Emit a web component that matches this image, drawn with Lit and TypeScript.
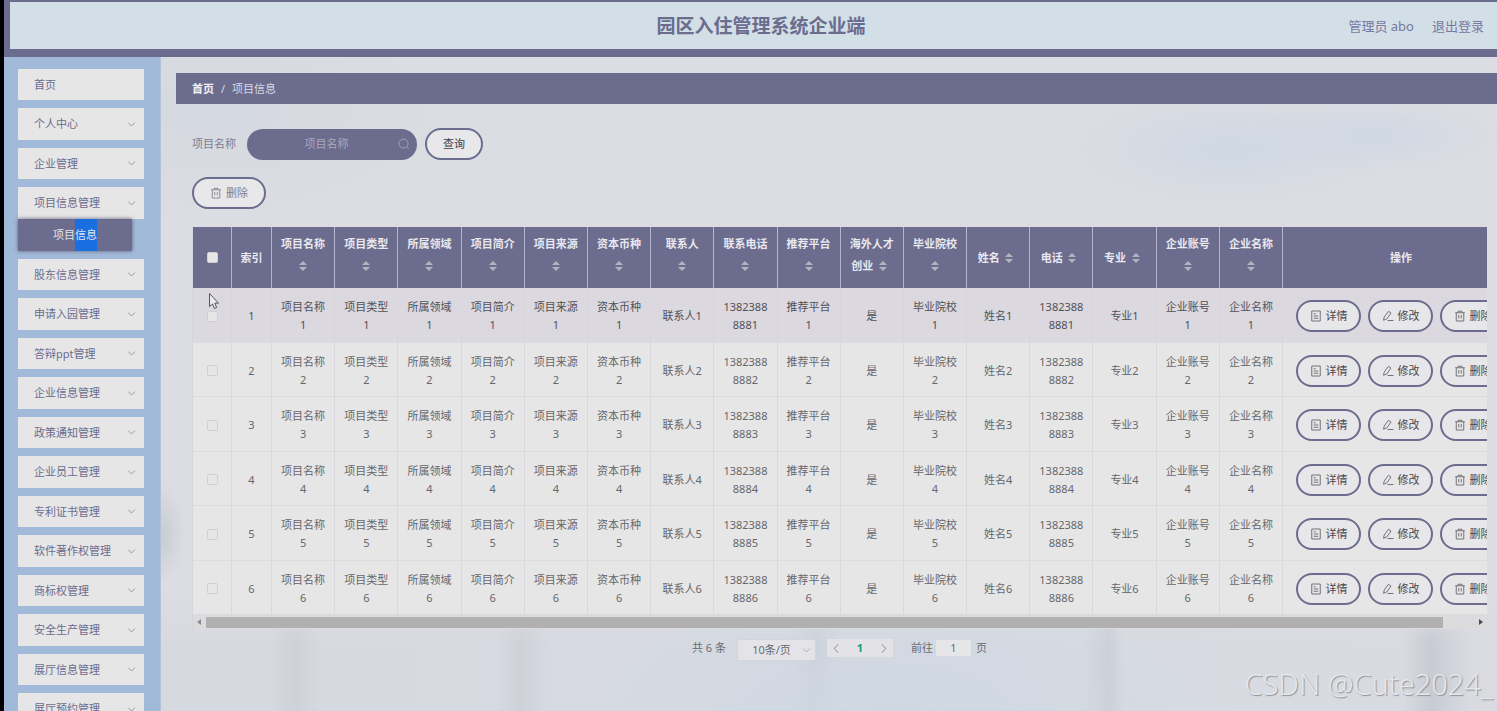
import { LitElement, html, css, svg } from "lit";
import { customElement, property, state } from "lit/decorators.js";
import { classMap } from "lit/directives/class-map.js";

const MENU_TOP = ["首页", "个人中心", "企业管理", "项目信息管理"];
const MENU_REST = [
  "股东信息管理", "申请入园管理", "答辩ppt管理", "企业信息管理", "政策通知管理", "企业员工管理",
  "专利证书管理", "软件著作权管理", "商标权管理", "安全生产管理", "展厅信息管理", "展厅预约管理",
];
const COLUMNS = [
  "项目名称", "项目类型", "所属领域", "项目简介", "项目来源", "资本币种", "联系人", "联系电话",
  "推荐平台", "海外人才创业", "毕业院校", "姓名", "电话", "专业", "企业账号", "企业名称",
];

const cellValue = (column: string, n: number) => {
  if (column === "海外人才创业") return "是";
  if (column === "联系电话" || column === "电话") return `1382388888${n}`;
  return `${column}${n}`;
};

const icon = (body: unknown, size = 12) => html`<svg
  width=${size} height=${size} viewBox="0 0 24 24" fill="none" stroke="currentColor"
  stroke-width="1.8" aria-hidden="true">${body}</svg>`;

const chevronDown = svg`<path d="M3 7l9 9 9-9" stroke-width="2.4"/>`;
const chevronLeft = svg`<path d="M16 3l-9 9 9 9" stroke-width="2.2"/>`;
const chevronRight = svg`<path d="M8 3l9 9-9 9" stroke-width="2.2"/>`;
const magnifier = svg`<circle cx="11" cy="11" r="9"/><path d="M17.500 17.500L21 22"/>`;
const trash = svg`<path d="M2.500 5.500h19M8 5V2.500h8V5M4.500 5.500V22h15V5.500M9.500 10v7M14.500 10v7"/>`;
const doc = svg`<path d="M3.500 2h17v20h-17zM7.500 7.500h4M7.500 12h9M7.500 16.500h9"/>`;
const pen = svg`<path d="M3 20.500l1.500-6.500L13 2.500l5 3.500L9.500 18 3 20.500zM11 21h12"/>`;

@customElement("side-menu")
export class SideMenu extends LitElement {
  static styles = css`
    :host { display: block; background: #a2bad9; padding: 12px 16px 0 14px; overflow: hidden; border-right: 1px solid #b4c2d8; }
    .list { list-style: none; margin: 0; padding: 0; }
    .entry { margin-bottom: 8px; }
    .entry.open { margin-bottom: 0; }
    .link {
      display: flex; align-items: center; justify-content: space-between; box-sizing: border-box;
      height: 32px; padding: 0 8px 0 16px; background: #e6e6e7; color: #6b6c8e;
      text-decoration: none; white-space: nowrap;
    }
    .entry:nth-child(odd) .link { height: 31px; }
    .link svg { color: #8d8d9b; }
    .sub { margin: 0 12px 8px 0; background: #6b6c8e; box-shadow: 0 0 4px #5e5f78; }
    .sublink { display: flex; justify-content: center; line-height: 32px; color: #e4e4ec; text-decoration: none; }
    .marked { background: #1a6fe0; }
  `;
  render() {
    return html`<nav aria-label="主菜单">
      <ul class="list">
        ${MENU_TOP.map((t, i) => html`<li class=${classMap({ entry: true, open: i === 3 })}>
          <a class="link" href="#">${t}${i ? icon(chevronDown, 9) : ""}</a></li>`)}
      </ul>
      <div class="sub"><a class="sublink" href="#" aria-current="page">项目<span class="marked">信息</span></a></div>
      <ul class="list">
        ${MENU_REST.map((t) => html`<li class="entry"><a class="link" href="#">${t}${icon(chevronDown, 9)}</a></li>`)}
      </ul>
    </nav>`;
  }
}

@customElement("project-table")
export class ProjectTable extends LitElement {
  @property({ type: Array }) rows: number[] = [];
  static styles = css`
    :host { display: block; border-left: 1px solid #d5d6dd; }
    .viewport { overflow: hidden; }
    .grid { width: max(100%, 1327px); table-layout: fixed; border-collapse: separate; border-spacing: 0; }
    .c-check { width: 39px; }
    .c-index { width: 40px; }
    .c-ops { width: 237px; }
    th, td { box-sizing: border-box; text-align: center; word-break: break-all; font-size: 11px; }
    th {
      height: 61px; padding: 0 8px; background: #6b6c8e; color: #e8e8ee; font-weight: 700;
      line-height: 22px; border-right: 1px solid #b4b5ce;
    }
    th.wrapped { padding-bottom: 5px; }
    th.narrow, td.narrow { padding-left: 0; padding-right: 0; }
    td {
      height: 55px; padding: 2px 8px 0; background: #e6e6e6; color: #67676c; line-height: 18px;
      border-right: 1px solid #d9d8df; border-bottom: 1px solid #dbdade;
    }
    tr:nth-child(even) td { height: 54px; }
    tr.hover td { background: #dcd8df; color: #515156; border-right-color: #d8d4db; }
    .sort { display: inline-flex; flex-direction: column; align-items: center; gap: 2px; width: 19px; padding-bottom: 2px; vertical-align: middle; }
    .up, .down { border: 4px solid transparent; border-top-width: 0; border-bottom: 4px solid #b3b3bd; }
    .down { border-top: 4px solid #b3b3bd; border-bottom-width: 0; }
    .tick {
      appearance: none; display: block; width: 11px; height: 11px; margin: 0 auto; background: #e6e6e8;
      border: 1px solid #d0d0d4; border-radius: 2px; box-sizing: border-box;
    }
    .ops { display: flex; gap: 7px; padding-left: 5px; }
    .op {
      display: flex; align-items: center; justify-content: center; gap: 4px; flex: none; box-sizing: border-box;
      width: 65px; height: 32px; padding: 0; border: 2px solid #6b6c8e; border-radius: 16px;
      background: #e7e6e8; color: #48484f; font: inherit;
    }
    .op svg { color: #66666c; }
    .bar { display: flex; align-items: center; justify-content: space-between; height: 14px; background: #dcdcde; padding: 0 4px; }
    .thumb { flex: 1; height: 11px; margin: 0 36px 0 5px; background: #b0b0b0; }
    .left, .right { border: 3px solid transparent; border-left-width: 0; border-right: 4px solid #8c8c90; }
    .right { border-left: 4px solid #4c4c50; border-right-width: 0; }
  `;
  render() {
    return html`<div class="viewport">
      <table class="grid">
        <colgroup>
          <col class="c-check" /><col class="c-index" />${COLUMNS.map(() => html`<col />`)}<col class="c-ops" />
        </colgroup>
        <thead><tr>
          <th class="narrow"><input class="tick" type="checkbox" aria-label="全选" /></th>
          <th class="narrow">索引</th>
          ${COLUMNS.map((c) => html`<th class=${classMap({ wrapped: c.length > 2 })}>${c}<span class="sort"><i class="up"></i><i class="down"></i></span></th>`)}
          <th>操作</th>
        </tr></thead>
        <tbody>
          ${this.rows.map((n) => html`<tr class=${classMap({ hover: n === 1 })}>
            <td class="narrow"><input class="tick" type="checkbox" aria-label="选择 ${n}" /></td>
            <td class="narrow">${n}</td>
            ${COLUMNS.map((c) => html`<td>${cellValue(c, n)}</td>`)}
            <td><div class="ops">
              <button class="op">${icon(doc)}详情</button>
              <button class="op">${icon(pen)}修改</button>
              <button class="op">${icon(trash)}删除</button>
            </div></td>
          </tr>`)}
        </tbody>
      </table>
    </div>
    <div class="bar"><i class="left"></i><div class="thumb"></div><i class="right"></i></div>`;
  }
}

@customElement("app-root")
export class AppRoot extends LitElement {
  @state() private rows = [1, 2, 3, 4, 5, 6];
  static styles = css`
    :host {
      display: grid; grid-template-rows: auto 1fr; height: 100vh; box-sizing: border-box; overflow: hidden;
      position: relative; border-left: 4px solid #000;
      font: 11px/18px "Noto Sans", "Noto Sans CJK SC", sans-serif; color: #6b6c8e;
    }
    .top {
      display: grid; grid-template-columns: 1fr auto 1fr; align-items: center; height: 47px; padding: 0 13px 0 28px;
      border: solid #6b6c8e; border-width: 2px 0 8px 6px; background: #d2dfe7;
    }
    .title { grid-column: 2; margin: 0; font-size: 19px; line-height: 28px; font-weight: 700; }
    .account { display: flex; justify-content: flex-end; gap: 18px; font-size: 13px; color: #7779a0; }
    .account a { color: inherit; text-decoration: none; }
    .body { display: grid; grid-template-columns: 157px 1fr; min-height: 0; }
    .main {
      min-width: 0; padding: 16px 0 0 15px;
      background:
        radial-gradient(ellipse 170px 60px at 80% 14%, #cfd8e3 0%, transparent 100%),
        radial-gradient(ellipse 130px 40px at 91% 12%, #d0d8e3 0%, transparent 100%),
        radial-gradient(ellipse 240px 110px at 4% 8%, #d4d8e0 0%, transparent 100%),
        radial-gradient(ellipse 24px 50px at 0% 73%, #c8cbd4 0%, transparent 100%),
        radial-gradient(ellipse 300px 120px at 55% 100%, #cfd8e2 0%, transparent 100%),
        linear-gradient(180deg, #dcdde2 0 82%, transparent 90%),
        linear-gradient(90deg, transparent 8%, #cfd1d8 10%, transparent 12%, transparent 25%, #cfd1d9 27%, transparent 29%,
          transparent 47%, #cbced6 49%, transparent 51%, transparent 69%, #cbced6 71%, transparent 72%,
          transparent 93%, #c8cbd3 95%, transparent 98%),
        linear-gradient(90deg, #d7d9e0, #d6dae2 60%, #d9dbe1);
    }
    .crumbs { display: flex; align-items: center; gap: 7px; height: 31px; padding: 0 16px; background: #6b6c8e; color: #d9d9e6; }
    .crumbs a { color: #efeff5; font-weight: 700; text-decoration: none; }
    .panel { padding: 24px 10px 0 16px; }
    .search { display: flex; align-items: center; margin-bottom: 17px; }
    .search label { margin-right: 11px; color: #7b7c96; }
    .field { display: flex; align-items: center; width: 170px; height: 31px; box-sizing: border-box; padding: 0 7px 0 8px; border-radius: 16px; background: #6b6c8e; color: #a5a6bd; margin-right: 8px; }
    .field input { flex: 1; min-width: 0; border: 0; padding: 0; background: none; outline: 0; font: inherit; text-align: center; color: #e4e4ec; }
    .field input::placeholder { color: #a9a9bd; opacity: 1; }
    .pill {
      display: flex; align-items: center; justify-content: center; gap: 4px; box-sizing: border-box; height: 32px;
      border: 2px solid #6b6c8e; border-radius: 16px; padding: 0 16px; background: #e8e7ea; color: #404046; font: inherit;
    }
    .pill.remove { margin-bottom: 18px; color: #80818f; }
    .pager { display: flex; align-items: center; justify-content: center; height: 18px; margin-top: 10px; color: #6a6b73; }
    .size { position: relative; display: flex; align-items: center; margin: 4px 11px 0; width: 79px; height: 22px; box-sizing: border-box; border: 1px solid #d4d5da; border-radius: 2px; background: #e4e4e8; }
    .size select { appearance: none; width: 100%; border: 0; padding: 0 10px 0 0; background: none; font: inherit; color: inherit; text-align: center; text-align-last: center; }
    .size svg { position: absolute; right: 4px; color: #a4a5ac; pointer-events: none; }
    .pages { display: flex; align-items: center; justify-content: space-between; width: 66px; height: 18px; padding: 0 4px; box-sizing: border-box; background: #e3e3e6; margin-right: 18px; }
    .pages button { display: flex; border: 0; padding: 0; background: none; font: inherit; color: #a0a1a9; }
    .pages .current { color: #159a80; font-weight: 700; }
    .jump { width: 35px; height: 16px; box-sizing: border-box; margin: 0 5px 0 3px; border: 0; border-radius: 2px; padding: 0; background: #e6e6e9; font: inherit; color: inherit; text-align: center; }
    .mark { position: absolute; right: 4px; bottom: 9px; font: 29px/36px "Noto Sans", sans-serif; font-weight: 300; color: #e6e7ea; text-shadow: 1px 1px 1px #8f9299; pointer-events: none; }
    .pointer { position: absolute; left: 204px; top: 292px; pointer-events: none; }
  `;
  render() {
    return html`
      <header class="top">
        <h1 class="title">园区入住管理系统企业端</h1>
        <div class="account"><span>管理员 abo</span><a href="#">退出登录</a></div>
      </header>
      <div class="body">
        <side-menu></side-menu>
        <main class="main">
          <nav class="crumbs" aria-label="路径"><a href="#">首页</a><span>/</span><span>项目信息</span></nav>
          <div class="panel">
            <form class="search" @submit=${(e: Event) => e.preventDefault()}>
              <label for="name">项目名称</label>
              <div class="field"><input id="name" type="text" placeholder="项目名称" />${icon(magnifier)}</div>
              <button class="pill">查询</button>
            </form>
            <button class="pill remove">${icon(trash)}删除</button>
            <project-table .rows=${this.rows}></project-table>
            <div class="pager">
              <span>共 6 条</span>
              <div class="size"><select aria-label="每页条数"><option>10条/页</option></select>${icon(chevronDown, 9)}</div>
              <div class="pages">
                <button aria-label="上一页">${icon(chevronLeft, 11)}</button>
                <button class="current">1</button>
                <button aria-label="下一页">${icon(chevronRight, 11)}</button>
              </div>
              <label for="jump">前往</label><input id="jump" class="jump" type="text" value="1" /><span>页</span>
            </div>
          </div>
        </main>
      </div>
      <div class="mark">CSDN @Cute2024_</div>
      <svg class="pointer" width="12" height="18" viewBox="0 0 12 18" aria-hidden="true">
        <path d="M1.500 1.500v13l3-2.500 2 4.500 2.200-1-2-4.300h3.800z" fill="#ececf0" stroke="#55555c"/>
      </svg>`;
  }
}
